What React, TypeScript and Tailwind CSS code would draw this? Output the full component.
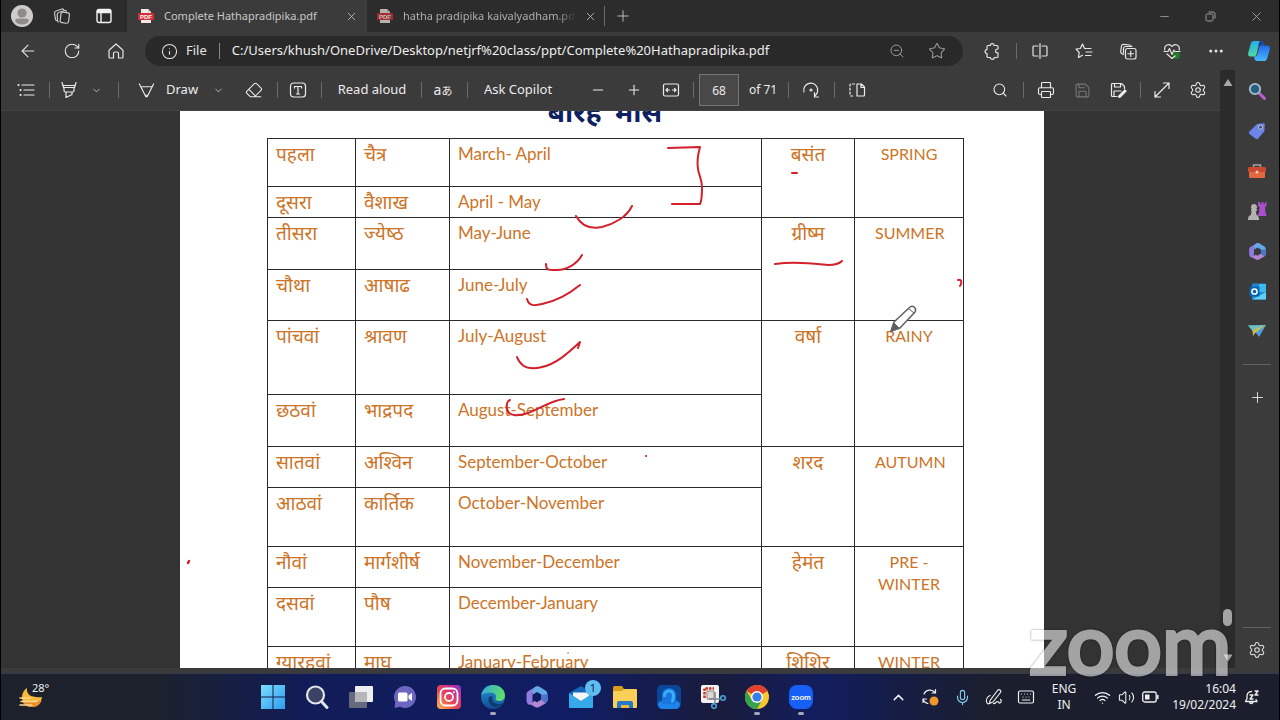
import React from 'react';
import {
  ArrowLeft, RotateCw, Info, ZoomOut, Star, Ellipsis, Search, Printer,
  Save, Settings, Plus, Minus, X, ChevronDown, ChevronUp, Mic, Keyboard, Eraser, Wifi, Volume2,
} from 'lucide-react';

interface IconButtonProps {
  label: string;
  className?: string;
  children: React.ReactNode;
}

const IconButton: React.FC<IconButtonProps> = ({ label, className = 'w-9', children }) => (
  <button type="button" aria-label={label} className={`flex h-full shrink-0 items-center justify-center ${className}`}>
    {children}
  </button>
);

const Separator: React.FC<{ className: string }> = ({ className }) => (
  <div className={`flex shrink-0 justify-center ${className}`}>
    <div className="h-4 w-px bg-[#6a6a6a]" />
  </div>
);

const Line: React.FC<{ size?: number; children: React.ReactNode }> = ({ size = 18, children }) => (
  <svg width={size} height={size} viewBox="0 0 18 18" fill="none" stroke="currentColor" strokeWidth="1.2" strokeLinecap="round" strokeLinejoin="round">
    {children}
  </svg>
);

const PdfIcon = () => (
  <svg width="16" height="16" viewBox="0 0 16 16" className="shrink-0">
    <path d="M3 1h7l3 3v11H3z" fill="#f5e9e8" />
    <path d="M10 1l3 3h-3z" fill="#c9c0c0" />
    <rect x="0" y="5" width="16" height="7" rx="1" fill="#d32f36" />
    <text x="8" y="11" textAnchor="middle" fontSize="6" fontWeight="700" fontFamily="Liberation Sans, sans-serif" fill="#fff">PDF</text>
  </svg>
);

const TabStrip = () => (
  <header className="flex h-8 shrink-0 bg-[#2c2c2c] text-[#c8c8c8]">
    <div className="flex w-[126px] shrink-0 items-center">
      <IconButton label="Profile" className="w-[42px]">
        <svg width="22" height="22" viewBox="0 0 22 22">
          <circle cx="11" cy="11" r="11" fill="#cfcdcb" />
          <circle cx="11" cy="8" r="4.6" fill="#8f8b88" />
          <path d="M4 16c0-2 2-2.6 3.500-2.600h7c1.500 0 3.500.6 3.500 2.600-1.600 2.400-4 3.600-7 3.600S5.600 18.400 4 16z" fill="#8f8b88" />
        </svg>
      </IconButton>
      <IconButton label="Workspaces" className="w-[38px]">
        <Line>
          <rect x="7.500" y="5.500" width="8.500" height="10.500" rx="2" transform="rotate(8 12 11)" />
          <path d="M3.500 13.500a1.500 1.500 0 0 1-1-1.200L1.500 6a2 2 0 0 1 1.500-2L9 2a1.500 1.500 0 0 1 1.500.6" />
          <path d="M5.500 15a1.500 1.500 0 0 1-1-1.200L4.200 7.500a2 2 0 0 1 1.500-2L11.500 3.500a1.500 1.500 0 0 1 1.800.8" />
        </Line>
      </IconButton>
      <IconButton label="Tab actions" className="w-[46px]">
        <svg width="16" height="16" viewBox="0 0 16 16" fill="none" stroke="#f2f2f2" strokeWidth="1.400">
          <rect x="1" y="1.500" width="14" height="13" rx="2" />
          <path d="M1 3.500h14" strokeWidth="3.500" />
          <path d="M5 4v10" />
        </svg>
      </IconButton>
    </div>
    <div role="tab" aria-selected="true" className="flex w-60 shrink-0 items-center bg-[#3b3b3b] pl-[11px]">
      <PdfIcon />
      <span className="ml-2.5 flex-1 whitespace-nowrap text-[11px]">Complete Hathapradipika.pdf</span>
      <IconButton label="Close tab" className="w-8"><X size={13} strokeWidth={1.5} /></IconButton>
    </div>
    <div role="tab" aria-selected="false" className="flex w-[238px] shrink-0 items-center pl-2.5">
      <span className="opacity-70"><PdfIcon /></span>
      <span className="ml-2.5 w-[174px] overflow-hidden whitespace-nowrap bg-linear-to-r from-[#b4b4b4] from-90% to-[#2c2c2c] bg-clip-text text-[11px] text-transparent">
        hatha pradipika kaivalyadham.pdf
      </span>
      <IconButton label="Close tab" className="w-7"><X size={13} strokeWidth={1.5} /></IconButton>
      <span className="ml-auto h-5 w-px bg-[#6a6a6a]" />
    </div>
    <IconButton label="New tab"><Plus size={18} strokeWidth={1.2} /></IconButton>
    <div className="ml-auto flex text-[#a0a0a0]">
      <IconButton label="Minimize" className="w-[46px]"><Minus size={13} strokeWidth={1.5} /></IconButton>
      <IconButton label="Restore" className="w-[46px]">
        <svg width="11" height="11" viewBox="0 0 11 11" fill="none" stroke="currentColor">
          <rect x="1" y="3" width="7" height="7" rx="1.500" />
          <path d="M3.500 1h4.500a2 2 0 0 1 2 2v4.500" />
        </svg>
      </IconButton>
      <IconButton label="Close" className="w-[46px]"><X size={15} strokeWidth={1.5} /></IconButton>
    </div>
  </header>
);

const AddressBar = () => (
  <div className="flex h-[38px] shrink-0 items-center pl-[5px] text-[#e4e4e4]">
    <IconButton label="Back" className="w-11"><ArrowLeft size={20} strokeWidth={1.3} /></IconButton>
    <IconButton label="Refresh" className="w-11"><RotateCw size={18} strokeWidth={1.5} /></IconButton>
    <IconButton label="Home" className="w-11">
      <Line><path d="M2 8.200L9 2l7 6.200V15a1 1 0 0 1-1 1h-3.500v-4.500a1.500 1.500 0 0 0-1.500-1.500H8a1.500 1.500 0 0 0-1.500 1.500V16H3a1 1 0 0 1-1-1z" /></Line>
    </IconButton>
    <div className="ml-[7px] flex h-[30px] min-w-0 flex-1 items-center rounded-full bg-[#292929] pl-4">
      <Info size={17} strokeWidth={1.5} />
      <span className="ml-2 text-[13px]">File</span>
      <span className="mx-3 h-4 w-px bg-[#8a8a8a]" />
      <input
        aria-label="Address"
        className="min-w-0 flex-1 bg-transparent text-[13px] text-[#ededed] outline-none"
        defaultValue="C:/Users/khush/OneDrive/Desktop/netjrf%20class/ppt/Complete%20Hathapradipika.pdf"
      />
      <IconButton label="Zoom out" className="w-10 text-[#9a9a9a]"><ZoomOut size={16} strokeWidth={1.5} /></IconButton>
      <IconButton label="Add to favorites" className="mr-1.5 w-10 text-[#9a9a9a]"><Star size={18} strokeWidth={1.4} /></IconButton>
    </div>
    <IconButton label="Extensions" className="ml-[7px] w-11">
      <Line><path d="M5 3.500h2.300a1.900 1.900 0 0 1 3.800 0H14a1 1 0 0 1 1 1V7h-.5a1.900 1.900 0 0 0 0 3.800h.5v3.700a1 1 0 0 1-1 1h-2.800a1.900 1.900 0 0 1-3.800 0H5a1 1 0 0 1-1-1v-3a1.900 1.900 0 0 1 0-3.800V4.500a1 1 0 0 1 1-1z" /></Line>
    </IconButton>
    <Separator className="w-1" />
    <IconButton label="Split screen" className="w-11">
      <Line><path d="M7 4H3a1 1 0 0 0-1 1v8a1 1 0 0 0 1 1h4M11 4h4a1 1 0 0 1 1 1v8a1 1 0 0 1-1 1h-4M9 1.500v15" /></Line>
    </IconButton>
    <IconButton label="Favorites" className="w-11">
      <Line><path d="M9.500 6.500L7.500 2 5.300 6.500 1 7.200l3.200 3.300-.8 5 4.100-2.300M9.500 6.500h6.500M11 10h6M10.500 13.500H16" /></Line>
    </IconButton>
    <IconButton label="Collections" className="w-11">
      <Line>
        <rect x="6.500" y="6.500" width="10.500" height="10.500" rx="2" />
        <path d="M11.750 9v5.500M9 11.750h5.500M4.500 12.500l-1.800-1a2 2 0 0 1-1-2L2.500 4a2 2 0 0 1 2.200-1.700l6 .7a2 2 0 0 1 1.600 1.500M4.500 11V6.500a2 2 0 0 1 2-2H13" />
      </Line>
    </IconButton>
    <IconButton label="Browser essentials" className="w-11">
      <Line>
        <circle cx="13.500" cy="13.500" r="3.500" fill="#1f7a2c" stroke="none" />
        <path d="M1.800 8C.8 3.500 6 .5 9 4.500 12 .5 17.200 3.500 16.200 8M4 12l5 4.500 3-2.500M1 9.500h4l1.500-3 2.500 6 2-4.500 1 1.500h5" />
      </Line>
    </IconButton>
    <IconButton label="Settings and more" className="w-11"><Ellipsis size={18} strokeWidth={2} /></IconButton>
    <IconButton label="Copilot" className="w-[41px]">
      <svg width="24" height="22" viewBox="0 0 26 24">
        <defs>
          <linearGradient id="cpA" x1="0" y1="0" x2="0.300" y2="1"><stop offset="0" stopColor="#1fa5ef" /><stop offset="1" stopColor="#52dba0" /></linearGradient>
          <linearGradient id="cpB" x1="0" y1="0" x2="0" y2="1"><stop offset="0" stopColor="#2468e8" /><stop offset="1" stopColor="#45b9ff" /></linearGradient>
        </defs>
        <path d="M19 23h-8c-2 0-2.500-1-3-3l-.5-2c2.500 0 3.500-1 4-3L13 9c.6-2 1.500-3 3.500-3H22c2.500 0 3.400 2 2.700 4.500L22 20c-.6 2-1.500 3-3 3z" fill="url(#cpB)" />
        <path d="M7 1h8c2 0 2.500 1 3 3l.5 2h-3c-2 0-3 1-3.500 3l-1.500 6c-.6 2-1.500 3-3.500 3H4C1.500 18 .6 16 1.300 13.500L4 4c.6-2 1.500-3 3-3z" fill="url(#cpA)" />
        <path d="M15 1c2 0 2.500 1 3 3l.5 2h-3c-2 0-3 1-3.500 3l-1 4 1.500-8c.4-2.500 1-4 2.500-4z" fill="#173f9c" />
      </svg>
    </IconButton>
  </div>
);

const PdfToolbar = () => (
  <div className="flex h-[41px] shrink-0 items-center border-b border-[#444] pl-[7px] pr-1 text-[13px] text-[#ececec]">
    <IconButton label="Contents">
      <Line><path d="M5 4h12M7 9h10M7 14h10" /><path d="M1.500 4h.1M3.500 9h.1M3.500 14h.1" strokeWidth="2" /></Line>
    </IconButton>
    <Separator className="w-2.5" />
    <IconButton label="Highlight" className="w-[30px]">
      <Line><path d="M2 1.500l1.500 5h11l1.500-5M4 6.500v3c0 1 .6 1.500 1.500 1.500h7c.9 0 1.500-.5 1.500-1.500v-3M6 11v5.500l6-3V11M3 4.500h12" /></Line>
    </IconButton>
    <IconButton label="Highlight options" className="w-6"><ChevronDown size={11} strokeWidth={1.5} /></IconButton>
    <Separator className="w-5" />
    <button type="button" className="flex h-full w-[76px] shrink-0 items-center gap-[11px] pl-2.5">
      <Line size={17}><path d="M1.500 2l6.800 13.500h1.400L16.500 2M3 5h12M7.500 14h3" /></Line>
      Draw
    </button>
    <IconButton label="Draw options" className="w-7"><ChevronDown size={11} strokeWidth={1.5} /></IconButton>
    <IconButton label="Erase" className="ml-1 w-9"><Eraser size={18} strokeWidth={1.4} /></IconButton>
    <Separator className="w-2.5" />
    <IconButton label="Add text" className="w-8">
      <Line><rect x="1.500" y="2" width="15" height="14" rx="3" /><path d="M5.500 7V5.500h7V7M9 5.500v7.500M7.500 13h3" /></Line>
    </IconButton>
    <Separator className="w-3.5" />
    <button type="button" className="h-full w-[88px] shrink-0">Read aloud</button>
    <Separator className="w-2.5" />
    <button type="button" aria-label="Translate" className="h-full w-[34px] shrink-0 whitespace-nowrap font-['Noto_Sans','Noto_Sans_CJK_JP',sans-serif] text-sm leading-4">
      a<span className="text-[11px]">あ</span>
    </button>
    <Separator className="w-3.5" />
    <button type="button" className="h-full w-[88px] shrink-0">Ask Copilot</button>
    <IconButton label="Zoom out" className="ml-[18px] w-9"><Minus size={16} strokeWidth={1.6} /></IconButton>
    <IconButton label="Zoom in"><Plus size={16} strokeWidth={1.6} /></IconButton>
    <IconButton label="Fit to width" className="w-[38px]">
      <Line><rect x="1.500" y="3" width="15" height="12" rx="1.500" /><path d="M4 9h3.500M14 9h-3.500M5.500 7.500L4 9l1.500 1.500M12.500 7.500L14 9l-1.500 1.500" /></Line>
    </IconButton>
    <Separator className="w-1.5" />
    <input
      aria-label="Page number"
      defaultValue="68"
      className="ml-[3px] h-8 w-10 shrink-0 border border-[#757575] bg-[#484848] text-center text-xs outline-none"
    />
    <span className="ml-2.5 w-8 shrink-0 whitespace-nowrap text-xs">of 71</span>
    <Separator className="w-3.5" />
    <IconButton label="Rotate" className="w-8">
      <Line><path d="M2 11A7 7 0 1 1 12.500 15M12.500 11.500V16h4" /><circle cx="9" cy="9" r="1" /></Line>
    </IconButton>
    <Separator className="w-3.5" />
    <IconButton label="Page view" className="w-8">
      <Line><path d="M9 3h4.500L16.500 6v8a1 1 0 0 1-1 1H9zM13 3v3.500h3.500" /><path d="M6.500 3H3a1 1 0 0 0-1 1v10a1 1 0 0 0 1 1h3.500" strokeDasharray="2 2" /></Line>
    </IconButton>
    <div className="ml-auto flex h-full items-center">
      <IconButton label="Find"><Search size={16} strokeWidth={1.6} /></IconButton>
      <Separator className="w-2.5" />
      <IconButton label="Print"><Printer size={18} strokeWidth={1.5} /></IconButton>
      <span className="flex h-full text-[#777]"><IconButton label="Save"><Save size={17} strokeWidth={1.5} /></IconButton></span>
      <IconButton label="Save as">
        <Line>
          <path d="M8 15.500H3.500a1 1 0 0 1-1-1v-11a1 1 0 0 1 1-1h9l3 3V8M5.500 2.500V6h6V2.500M5 15.500V10h7" />
          <path d="M10.500 15.500L16 10" strokeWidth="3" />
        </Line>
      </IconButton>
      <Separator className="w-2" />
      <IconButton label="Full screen"><Line><path d="M10.500 2H16v5.500M16 2L2 16M2 10.500V16h5.500" /></Line></IconButton>
      <IconButton label="PDF settings"><Settings size={18} strokeWidth={1.4} /></IconButton>
    </div>
  </div>
);

interface Month {
  order: string;
  hindi: string;
  english: string;
  height: string;
  season?: [string, string];
  span?: number;
}

const months: Month[] = [
  { order: 'पहला', hindi: 'चैत्र', english: 'March- April', height: 'h-12', season: ['बसंत', 'SPRING'], span: 2 },
  { order: 'दूसरा', hindi: 'वैशाख', english: 'April - May', height: 'h-[31px]' },
  { order: 'तीसरा', hindi: 'ज्येष्\u200dठ', english: 'May-June', height: 'h-[52px]', season: ['ग्रीष्म', 'SUMMER'], span: 2 },
  { order: 'चौथा', hindi: 'आषाढ', english: 'June-July', height: 'h-[51px]' },
  { order: 'पांचवां', hindi: 'श्रावण', english: 'July-August', height: 'h-[74px]', season: ['वर्षा', 'RAINY'], span: 2 },
  { order: 'छठवां', hindi: 'भाद्रपद', english: 'August-September', height: 'h-[52px]' },
  { order: 'सातवां', hindi: 'अश्\u200dविन', english: 'September-October', height: 'h-[41px]', season: ['शरद', 'AUTUMN'], span: 2 },
  { order: 'आठवां', hindi: 'कार्तिक', english: 'October-November', height: 'h-[59px]' },
  { order: 'नौवां', hindi: 'मार्गशीर्ष', english: 'November-December', height: 'h-[41px]', season: ['हेमंत', 'PRE - WINTER'], span: 2 },
  { order: 'दसवां', hindi: 'पौष', english: 'December-January', height: 'h-[59px]' },
  { order: 'ग्यारहवां', hindi: 'माघ', english: 'January-February', height: 'h-[52px]', season: ['शिशिर', 'WINTER'], span: 1 },
];

const cell = 'border border-[#2a2a2a] px-2 pt-1 pb-0 align-top whitespace-nowrap';
const hindiCell = `${cell} text-[19px] leading-[22px]`;

const Annotations = () => (
  <svg className="absolute left-0 top-0" width="864" height="557" viewBox="180 111 864 557" fill="none" stroke="#d3202c" strokeWidth="2" strokeLinecap="round" strokeLinejoin="round">
    <path d="M668 148L700 147C698 154 697 163 698 169C699 176 702 178 702 188C702 196 702 200 700 204L672 204" />
    <path d="M576 216C582 227 592 229 602 227C614 224 627 217 632 206" />
    <path d="M546 264C546 271 549 270 557 270C567 270 577 264 582 255" />
    <path d="M527 299C529 306 534 306 542 304C557 301 569 294 580 285" />
    <path d="M517 357C521 368 530 370 542 367C556 364 567 354 580 342L578 348" />
    <path d="M510 400C505 402 505 414 514 415C530 417 546 401 564 399" />
    <path d="M792 173h5" />
    <path d="M775 264C797 261 817 264 828 265C834 265 839 264 842 261" />
    <path d="M958 280c4-1 4 3 2 6" />
    <path d="M188 563l1-2" strokeWidth="2.500" />
    <path d="M646 456h.1" />
    <path d="M568 653h.1" strokeWidth="1.500" stroke="#b8682c" />
    <path d="M891 331l3-9 16-15c3-2 7 1 5 5l-15 16z" fill="#fff" stroke="#5f6063" strokeWidth="1.500" />
    <path d="M891 331l3-8 5 5z" fill="#5f6063" stroke="#5f6063" strokeWidth="1" />
    <path d="M909 309l5 4" stroke="#5f6063" strokeWidth="1" />
  </svg>
);

const Document = () => (
  <main className="flex-1 overflow-hidden bg-[#333] pl-[3px]">
    <article className="relative mx-auto h-full w-[864px] overflow-hidden bg-white font-['Lato','Noto_Sans_Devanagari','Noto_Sans',sans-serif] text-[#cc7427]">
      <h1 className="-mt-4 h-[43px] pr-3.5 text-center text-[28px] font-bold leading-8 text-[#0f2060]">बारह&nbsp; मास</h1>
      <table className="ml-[87px] w-[697px] table-fixed border-collapse text-base leading-[22px]">
        <colgroup>
          <col className="w-[88px]" />
          <col className="w-[94px]" />
          <col className="w-[312px]" />
          <col className="w-[93px]" />
          <col className="w-[109px]" />
        </colgroup>
        <tbody>
          {months.map((m) => (
            <tr key={m.english} className={m.height}>
              <td className={hindiCell}>{m.order}</td>
              <td className={hindiCell}>{m.hindi}</td>
              <td className={`${cell} text-[17px] leading-[22px]`}>{m.english}</td>
              {m.season && (
                <>
                  <td rowSpan={m.span} className={`${hindiCell} text-center`}>{m.season[0]}</td>
                  <td rowSpan={m.span} className="border border-[#2a2a2a] px-5 pt-1 text-center align-top">{m.season[1]}</td>
                </>
              )}
            </tr>
          ))}
        </tbody>
      </table>
      <Annotations />
    </article>
  </main>
);

const Scrollbar = () => (
  <div className="flex w-[15px] shrink-0 flex-col items-center bg-[#2b2b2b] pt-2 pb-1.5">
    <svg width="10" height="9" viewBox="0 0 10 9"><path d="M5 1l4.500 7h-9z" fill="#a8a8a8" /></svg>
    <div className="mt-auto h-[17px] w-[9px] rounded-full bg-[#a3a3a3]" />
    <svg className="mt-7" width="10" height="8" viewBox="0 0 10 8"><path d="M5 7.500L.5.5h9z" fill="#a8a8a8" /></svg>
  </div>
);

const HexLogo: React.FC<{ size: number }> = ({ size }) => (
  <svg width={size} height={size} viewBox="0 0 24 24">
    <path d="M11 1.500L3.500 6C2 7 1.500 8 1.500 9.500v6c0 2 1 3.500 3 4.500 1.500-1 3-2 3-4V9.500c0-1.500.6-2.500 2-3.300L14 3.500z" fill="#8f7be0" />
    <path d="M11 1.500c1-.5 2-.5 3 0L20.500 5.500C22 6.500 22.500 8 22.500 9.500V16c-1.500-.5-2.500-1.500-4-2.500l-2-1.200V9.600L12 7 8 9.500C7 5.500 8.500 3 11 1.500z" fill="#62a9e6" />
    <path d="M22.500 13c0 3-.5 4.500-2.500 5.700L14 22c-1.500.8-2.500.8-4 0l-6-3.500c2.500 0 4-1.500 5.500-2.500L12 17.300l4.500-2.800V10z" fill="#b287d3" />
    <path d="M22.500 9v5c0 3-1.500 4.500-3 3.500l-3-2.500V10z" fill="#4c71c8" />
  </svg>
);

const Sidebar = () => (
  <aside className="flex w-11 shrink-0 flex-col items-center pt-px pb-[3px] text-[#e4e4e4]">
    <div className="flex flex-col *:h-10">
      <IconButton label="Search">
        <svg width="18" height="18" viewBox="0 0 18 18" fill="none">
          <path d="M11 11l5.500 5.500" stroke="#b75fd0" strokeWidth="3" strokeLinecap="round" />
          <circle cx="7" cy="7" r="5.200" fill="#28617f" stroke="#a9bfd0" strokeWidth="1.800" />
        </svg>
      </IconButton>
      <IconButton label="Shopping">
        <svg width="18" height="18" viewBox="0 0 18 18">
          <path d="M9 2l6.500-.8c.8 0 1.200.5 1.200 1.200L16.500 9l-6.300 7.500c-.7.8-1.700.8-2.500.2L1.500 12c-.8-.7-.8-1.700 0-2.500z" fill="#6b84ea" />
          <circle cx="12.500" cy="5.200" r="2" fill="#3d4b80" stroke="#c8cbb8" />
        </svg>
      </IconButton>
      <IconButton label="Tools">
        <svg width="18" height="16" viewBox="0 0 18 16">
          <path d="M5.500 4V2h7v2" fill="none" stroke="#a9a29d" strokeWidth="1.500" />
          <path d="M1 4h16a1 1 0 0 1 1 1v4H0V5a1 1 0 0 1 1-1z" fill="#c94a2c" />
          <path d="M1 9h16v5a1 1 0 0 1-1 1H2a1 1 0 0 1-1-1z" fill="#e2683f" />
          <circle cx="9" cy="9" r="1.500" fill="#f6cfc0" />
        </svg>
      </IconButton>
      <IconButton label="Games">
        <svg width="20" height="20" viewBox="0 0 20 20">
          <path d="M11 1h2v2h1.500V1h2v2H18V1h1.500v4l-1.500 1 .5 6 1 2v1h-9v-1l1.500-2 .5-6-1.500-1z" fill="#a94fd0" />
          <path d="M7 3a3 3 0 0 1 2 5.300h1V10H8.700l.8 4c2 .8 2.500 2 2.500 5H1c0-3 .6-4.200 2.800-5l.9-4H4V8.300h1A3 3 0 0 1 7 3z" fill="#b5b3b2" />
        </svg>
      </IconButton>
      <IconButton label="Microsoft 365"><HexLogo size={19} /></IconButton>
      <IconButton label="Outlook">
        <svg width="17" height="17" viewBox="0 0 17 17">
          <rect x="3" y="0.500" width="14" height="16" rx="1" fill="#1e88d6" />
          <path d="M10 1h7v8h-7z" fill="#3fbaf0" />
          <path d="M3 16.500L17 9v7.500z" fill="#5fd0f5" />
          <rect x="0.500" y="3.500" width="10" height="10" rx="1" fill="#0a63b0" />
          <circle cx="5.500" cy="8.500" r="2.600" fill="none" stroke="#fff" strokeWidth="1.500" />
        </svg>
      </IconButton>
      <IconButton label="Drop">
        <svg width="18" height="14" viewBox="0 0 18 14">
          <path d="M0 1.500L18 1l-7 12-3-4z" fill="#4d9fe0" />
          <path d="M0 1.500L18 1 5 7.500z" fill="#6cc3bd" />
          <path d="M18 1L4.500 6.500 5 12l2.500-3.500z" fill="#d8bd45" />
        </svg>
      </IconButton>
    </div>
    <hr className="mt-[13px] w-7 border-[#606060]" />
    <IconButton label="Customize" className="mt-3 h-10 max-h-10 w-9"><Plus size={17} strokeWidth={1.3} /></IconButton>
    <hr className="mt-auto w-7 border-[#606060]" />
    <div className="mt-0.5 h-10"><IconButton label="Sidebar settings"><Settings size={18} strokeWidth={1.4} /></IconButton></div>
  </aside>
);

const TaskIcon: React.FC<{ label: string; running?: boolean; children: React.ReactNode }> = ({ label, running, children }) => (
  <button type="button" aria-label={label} className="relative flex h-full w-11 shrink-0 items-center justify-center">
    {children}
    {running && <span className="absolute bottom-[5px] h-[3px] w-1.5 rounded-full bg-[#a4a8b8]" />}
  </button>
);

const Taskbar = () => (
  <footer className="flex h-[47px] shrink-0 items-center border-t border-[#33384c] bg-[linear-gradient(to_right,#1c212c_12%,#111c58_24%,#101d63_45%,#191c3c_56%,#121d5e_64%,#161d45_70%,#1b1f2d_78%)] text-[#f0f0f0]">
    <div className="flex w-[250px] shrink-0 items-center pl-[18px]">
      <button type="button" aria-label="Weather" className="relative h-8 w-10">
        <svg width="26" height="26" viewBox="0 0 26 26" className="mt-0.5">
          <path d="M8 3c-1 7 5 10 15 9-1 7-5 10-10 10C7 22 3 18 3 13c0-5 2-8 5-10z" fill="#f6b93c" />
          <path d="M3.500 16h19c-2 4-5 6-9.500 6-5 0-8-2-9.500-6z" fill="#ea8c2a" />
          <path d="M1 13h10M2 16.500h16M1 20h12" stroke="#f9dc94" strokeWidth="1.500" strokeLinecap="round" />
        </svg>
        <span className="absolute left-[13px] top-0 text-[11px] leading-[14px]">28°</span>
      </button>
    </div>
    <nav className="flex h-full">
      <TaskIcon label="Start">
        <svg width="24" height="24" viewBox="0 0 24 24">
          <defs><linearGradient id="win" x1="0" y1="0" x2="1" y2="1"><stop offset="0" stopColor="#7fdcfb" /><stop offset="1" stopColor="#2a9cf0" /></linearGradient></defs>
          <path d="M0 0h11.500v11.500H0zM12.500 0H24v11.500H12.500zM0 12.500h11.500V24H0zM12.500 12.500H24V24H12.500z" fill="url(#win)" />
        </svg>
      </TaskIcon>
      <TaskIcon label="Search">
        <svg width="24" height="24" viewBox="0 0 24 24" fill="none" stroke="#e2e4ea">
          <circle cx="10.500" cy="10" r="8.500" fill="#3a4266" strokeWidth="2.200" />
          <path d="M16.500 16.500l5.500 6" strokeWidth="3" strokeLinecap="round" />
        </svg>
      </TaskIcon>
      <TaskIcon label="Task view">
        <svg width="24" height="22" viewBox="0 0 24 22">
          <rect x="6" y="0" width="18" height="16" rx="1" fill="#eeeef0" />
          <rect x="0" y="6" width="18" height="16" rx="1" fill="#777882" fillOpacity="0.850" />
          <path d="M6 6h12v10H6z" fill="#b5b5ba" />
        </svg>
      </TaskIcon>
      <TaskIcon label="Chat">
        <svg width="24" height="24" viewBox="0 0 24 24">
          <path d="M12 1a11 11 0 1 1-5 20.800L1.500 23 2.200 17A11 11 0 0 1 12 1z" fill="#6c66c2" />
          <rect x="5" y="7.500" width="9.500" height="9" rx="1.500" fill="#fff" />
          <path d="M15.500 10.500L19 8v8l-3.500-2.500z" fill="#fff" />
        </svg>
      </TaskIcon>
      <TaskIcon label="Instagram">
        <svg width="24" height="24" viewBox="0 0 24 24" fill="none" stroke="#fff" strokeWidth="1.800">
          <defs>
            <linearGradient id="ig" x1="0" y1="1" x2="1" y2="0">
              <stop offset="0" stopColor="#f9c04d" /><stop offset="0.400" stopColor="#ef4b4f" /><stop offset="0.750" stopColor="#c72f93" /><stop offset="1" stopColor="#7a3ad0" />
            </linearGradient>
          </defs>
          <rect width="24" height="24" rx="4" fill="url(#ig)" stroke="none" />
          <rect x="3.500" y="3.500" width="17" height="17" rx="5" />
          <circle cx="12" cy="12" r="4" />
          <circle cx="16.800" cy="7.200" r="1" fill="#fff" stroke="none" />
        </svg>
      </TaskIcon>
      <TaskIcon label="Edge" running>
        <svg width="24" height="24" viewBox="0 0 24 24">
          <defs>
            <linearGradient id="edgeA" x1="0" y1="0" x2="1" y2="0.300"><stop offset="0" stopColor="#2fa5e0" /><stop offset="1" stopColor="#5fdc6a" /></linearGradient>
            <linearGradient id="edgeB" x1="0" y1="0" x2="0" y2="1"><stop offset="0" stopColor="#2793d8" /><stop offset="1" stopColor="#124d94" /></linearGradient>
          </defs>
          <circle cx="12" cy="12" r="12" fill="url(#edgeB)" />
          <path d="M.3 10C1.500 4 6 0 12 0c7 0 12 5 12 10.500 0 3.500-2.500 5.500-5.500 5.500-3 0-4.500-1.200-4-2.500 2-3-1-6-5-6C5 7.500 1.500 9 .3 10z" fill="url(#edgeA)" />
          <path d="M9 11c-4 4 0 11 6 11 3 0 5-1.200 7-4-6 3-12 0-10.500-6z" fill="#0f3a72" />
        </svg>
      </TaskIcon>
      <TaskIcon label="Microsoft 365"><HexLogo size={24} /></TaskIcon>
      <TaskIcon label="Mail, 1 new">
        <svg width="24" height="24" viewBox="0 0 24 24">
          <path d="M0 8L12 1l12 7v14a1 1 0 0 1-1 1H1a1 1 0 0 1-1-1z" fill="#1467b8" />
          <path d="M0 8l12 8 12-8v14a1 1 0 0 1-1 1H1a1 1 0 0 1-1-1z" fill="#35a9ea" />
          <path d="M4 7.500h16v3.200L12 16l-8-5.300z" fill="#f4f7fa" />
        </svg>
        <span className="absolute right-0.5 top-1.5 size-4 rounded-full bg-[#5dbdf0] text-center text-[11px] leading-4 text-[#12224f]">1</span>
      </TaskIcon>
      <TaskIcon label="File Explorer">
        <svg width="24" height="24" viewBox="0 0 24 24">
          <path d="M0 2.500A1.500 1.500 0 0 1 1.500 1H9l2 3h12v5H0z" fill="#d99b1c" />
          <path d="M0 6h9l2-2h12a1 1 0 0 1 1 1v17a1 1 0 0 1-1 1H1a1 1 0 0 1-1-1z" fill="#f8cf57" />
          <path d="M4 23v-5a2 2 0 0 1 2-2h12a2 2 0 0 1 2 2v5z" fill="#2378c8" />
          <path d="M8 20h8v3H8z" fill="#f1b93a" />
        </svg>
      </TaskIcon>
      <TaskIcon label="Security">
        <svg width="24" height="24" viewBox="0 0 24 24">
          <rect width="24" height="24" rx="5" fill="#0b4699" />
          <path d="M1 19c1-3 5-4 11-4s10 1 11 4c0 3-2 5-5 5H6c-3 0-5-2-5-5z" fill="#1f84ea" />
          <path d="M5 19V10a7 7 0 0 1 14 0v9z" fill="#1a76dc" />
          <path d="M7.500 10.500a4.500 4.500 0 0 1 9 0c0 2.500-.5 3.500-1 5.500" fill="none" stroke="#3aaef8" strokeWidth="3" strokeLinecap="round" />
        </svg>
      </TaskIcon>
      <TaskIcon label="Snipping Tool">
        <svg width="25" height="24" viewBox="0 0 25 24" fill="none">
          <rect x="0" y="0" width="18" height="18" rx="2" fill="#f3f2f2" />
          <path d="M3.500 13V3.500H13" stroke="#c8352f" strokeWidth="2.500" strokeDasharray="2.500 1" />
          <path d="M6 6h7v8H6z" fill="#ded9d4" stroke="#8d8883" />
          <path d="M14 7v10l-1 2M8 14h10l2-1" stroke="#7f858c" strokeWidth="1.500" />
          <circle cx="13" cy="21" r="2.300" stroke="#4aa7dc" strokeWidth="1.500" />
          <circle cx="22" cy="13" r="2.300" stroke="#4aa7dc" strokeWidth="1.500" />
        </svg>
      </TaskIcon>
      <TaskIcon label="Chrome" running>
        <svg width="24" height="24" viewBox="0 0 24 24">
          <circle cx="12" cy="12" r="12" fill="#f8c92e" />
          <path d="M12 12L1.600 6A12 12 0 0 1 22.400 6z" fill="#e2402f" />
          <path d="M1.600 6a12 12 0 0 0 10.400 18l5.200-9L12 12 6.800 15z" fill="#35a24c" />
          <path d="M12 6h10.400L12 12z" fill="#e2402f" />
          <circle cx="12" cy="12" r="6" fill="#fff" />
          <circle cx="12" cy="12" r="4.600" fill="#3b7de8" />
        </svg>
      </TaskIcon>
      <TaskIcon label="Zoom" running>
        <span className="flex size-6 items-center justify-center rounded-lg bg-[#1660f5] font-['Lato',sans-serif] text-[8px] font-bold leading-none text-white">zoom</span>
      </TaskIcon>
    </nav>
    <div className="ml-auto flex h-full shrink-0 items-center pr-[15px]">
      <IconButton label="Hidden icons" className="w-8"><ChevronUp size={17} strokeWidth={2} /></IconButton>
      <IconButton label="Updates" className="w-8">
        <Line>
          <path d="M3 6a6.500 6.500 0 0 1 11-1.500M14.500 1.500v3.500H11M2 11a6.500 6.500 0 0 0 5 4.500M2 14.500V11h3.500" />
          <circle cx="13" cy="13" r="4.500" fill="#f0982c" stroke="none" />
        </Line>
      </IconButton>
      <IconButton label="Microphone" className="w-8 text-[#86cdea]"><Mic size={17} strokeWidth={1.6} /></IconButton>
      <IconButton label="Pen" className="w-8">
        <Line>
          <path d="M5 12.500L12.500 2.500a1.800 1.800 0 0 1 3 2L8 14l-3.500 1.500zM5 7.500C2 9 .5 12 2 15c1 1.500 3 .5 3-.5M8.500 15.500c2 .5 2.500-2 4-2s1 2 2.500 1.500 1.500-2.500.5-3.500" />
        </Line>
      </IconButton>
      <IconButton label="Touch keyboard" className="w-8"><Keyboard size={18} strokeWidth={1.6} /></IconButton>
      <button type="button" className="w-11 text-center text-xs leading-4">ENG<br />IN</button>
      <div className="mx-1 flex h-full">
        <IconButton label="Network" className="w-6"><Wifi size={17} strokeWidth={1.8} /></IconButton>
        <IconButton label="Volume" className="w-6"><Volume2 size={17} strokeWidth={1.5} /></IconButton>
        <IconButton label="Battery" className="w-6">
          <svg width="17" height="12" viewBox="0 0 17 12" fill="none" stroke="currentColor">
            <rect x="0.700" y="1" width="13.500" height="10" rx="2" strokeWidth="1.300" />
            <path d="M3 3.500h4.500v5H3z" fill="currentColor" stroke="none" />
            <path d="M15.800 4.500v3" strokeWidth="1.500" strokeLinecap="round" />
          </svg>
        </IconButton>
      </div>
      <button type="button" className="w-[70px] whitespace-nowrap text-right text-xs leading-4">16:04<br />19/02/2024</button>
      <IconButton label="Notifications" className="ml-1 w-6">
        <svg width="16" height="16" viewBox="0 0 16 16" fill="none" stroke="currentColor" strokeWidth="1.300" strokeLinecap="round" strokeLinejoin="round">
          <path d="M7.500 2.500C4.500 2.500 3 5 3 7v2.500L1.500 12.500h11.500l-1-2M5.500 13c.5 2 3 2 3.500 0M6 6h3l-3 4h3M11 2h3l-3 4h3" />
        </svg>
      </IconButton>
    </div>
  </footer>
);

const App = () => (
  <div className="relative flex h-screen flex-col overflow-hidden border-x border-black bg-[#3b3b3b] font-['Noto_Sans','Open_Sans',sans-serif]">
    <TabStrip />
    <AddressBar />
    <div className="flex min-h-0 flex-1">
      <div className="mb-[5px] flex min-w-0 flex-1">
        <div className="flex min-w-0 flex-1 flex-col">
          <PdfToolbar />
          <Document />
        </div>
        <Scrollbar />
      </div>
      <Sidebar />
    </div>
    <Taskbar />
    <div className="pointer-events-none absolute bottom-12 right-12 font-['Lato',sans-serif] text-[84px] leading-[60px] text-white opacity-55 drop-shadow-[0_0_1px_rgba(0,0,0,0.8)] [-webkit-text-stroke:4px_white]">
      zoom
    </div>
  </div>
);

export default App;
